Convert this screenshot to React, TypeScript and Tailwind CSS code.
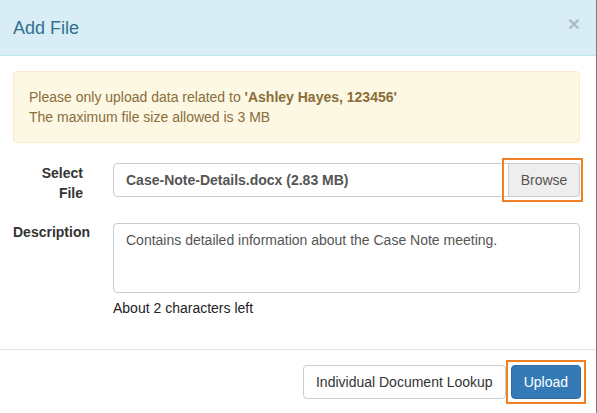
import React from "react";

export default function App() {
  return (
    <div className="w-[597px] h-[413px] overflow-hidden bg-white font-['Liberation_Sans',Arial,sans-serif] text-[14px] leading-[20px] text-[#333]">
      <div className="w-[597px] h-full border-r border-[#7a7a7a] bg-white">
        {/* Header */}
        <div className="h-[56px] bg-[#d9edf7] border-b border-[#bce8f1] flex items-center justify-between pl-[13px] pr-[16px]">
          <h4 className="text-[18px] leading-[26px] text-[#31708f]">Add File</h4>
          <span className="text-[21px] leading-none font-bold text-black opacity-20 mb-[9px]">×</span>
        </div>

        {/* Body */}
        <div className="pt-[15px] pl-[13px] pr-[16px] pb-[31px]">
          <div className="bg-[#fcf8e3] border border-[#faebcc] text-[#8a6d3b] rounded-[4px] px-[15px] py-[15px] mb-[20px]">
            <div>
              Please only upload data related to <b>'Ashley Hayes, 123456'</b>
            </div>
            <div>The maximum file size allowed is 3 MB</div>
          </div>

          <div className="flex mb-[20px]">
            <label className="w-[70px] shrink-0 text-right font-bold text-[#333]">
              Select
              <br />
              File
            </label>
            <div className="ml-[30px] flex-1 flex h-[34px]">
              <div className="flex-1 border border-[#ccc] rounded-l-[4px] px-[12px] flex items-center font-bold text-[#555]">
                Case-Note-Details.docx (2.83 MB)
              </div>
              <div className="relative">
                <div className="h-[34px] w-[71px] bg-[#eee] border border-l-0 border-[#ccc] rounded-r-[4px] flex items-center justify-center text-[#555]">
                  Browse
                </div>
                <div className="absolute -left-[7px] -right-[3px] -top-[5px] -bottom-[5px] border-2 border-[#ef8023]" />
              </div>
            </div>
          </div>

          <div className="flex">
            <label className="w-[70px] shrink-0 text-left font-bold text-[#333] whitespace-nowrap -mt-[1px]">Description</label>
            <div className="ml-[30px] flex-1">
              <div className="h-[70px] border border-[#ccc] rounded-[4px] px-[12px] py-[6px] text-[#555]">
                Contains detailed information about the Case Note meeting.
              </div>
              <div className="mt-[5px] text-[#222]">About 2 characters left</div>
            </div>
          </div>
        </div>

        {/* Footer */}
        <div className="border-t border-[#e5e5e5] pt-[15px] pr-[15px] flex justify-end">
          <button className="h-[34px] px-[12px] border border-[#ccc] rounded-[4px] bg-white text-[#333]">
            Individual Document Lookup
          </button>
          <div className="relative ml-[5px]">
            <button className="h-[34px] px-[12px] border border-[#2e6da4] rounded-[4px] bg-[#337ab7] text-white">
              Upload
            </button>
            <div className="absolute -left-[5px] -right-[5px] -top-[5px] -bottom-[5px] border-2 border-[#ef8023]" />
          </div>
        </div>
      </div>
    </div>
  );
}
